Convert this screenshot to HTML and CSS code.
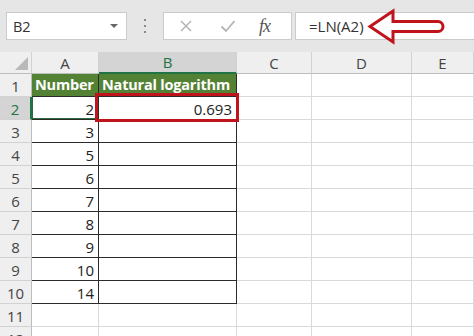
FILE: index.html
```html
<!DOCTYPE html>
<html lang="en">
<head>
    <meta charset="UTF-8">
    <title>LN function</title>
    <link rel="stylesheet" href="styles.css">
</head>
<body>
    <div class="topbar">
        <div class="namebox">
            <span>B2</span>
            <span class="caret"></span>
        </div>
        <div class="dots"><i></i><i></i><i></i></div>
        <div class="fxbox">
            <svg class="ico" width="14" height="14" viewBox="0 0 14 14"><path d="M2 2 L12 12 M12 2 L2 12" stroke="#b4b4b4" stroke-width="1.5" fill="none"/></svg>
            <svg class="ico" width="16" height="14" viewBox="0 0 16 14"><path d="M1.5 7.5 L6 12 L14.5 2" stroke="#b4b4b4" stroke-width="1.8" fill="none"/></svg>
            <span class="fx">fx</span>
        </div>
        <div class="formula">=LN(A2)</div>
        <svg class="arrow" width="82" height="40" viewBox="0 0 82 40">
            <path d="M4 19.5 L27 4 L27 14.5 L72 14.5 A5 5 0 0 1 72 24.5 L27 24.5 L27 35 Z" fill="#fff" stroke="#c0141c" stroke-width="3" stroke-linejoin="miter"/>
        </svg>
    </div>

    <div class="sheet">
        <div class="grid">
            <div class="ch corner"><span class="tri"></span></div>
            <div class="ch">A</div>
            <div class="ch on">B</div>
            <div class="ch">C</div>
            <div class="ch">D</div>
            <div class="ch">E</div>

            <div class="rh">1</div>
            <div class="c box head">Number</div>
            <div class="c box head">Natural logarithm</div>
            <div class="c"></div><div class="c"></div><div class="c"></div>

            <div class="rh on">2</div>
            <div class="c box ref">2</div>
            <div class="c box">0.693</div>
            <div class="c"></div><div class="c"></div><div class="c"></div>

            <div class="rh">3</div>
            <div class="c box">3</div><div class="c box"></div>
            <div class="c"></div><div class="c"></div><div class="c"></div>

            <div class="rh">4</div>
            <div class="c box">5</div><div class="c box"></div>
            <div class="c"></div><div class="c"></div><div class="c"></div>

            <div class="rh">5</div>
            <div class="c box">6</div><div class="c box"></div>
            <div class="c"></div><div class="c"></div><div class="c"></div>

            <div class="rh">6</div>
            <div class="c box">7</div><div class="c box"></div>
            <div class="c"></div><div class="c"></div><div class="c"></div>

            <div class="rh">7</div>
            <div class="c box">8</div><div class="c box"></div>
            <div class="c"></div><div class="c"></div><div class="c"></div>

            <div class="rh">8</div>
            <div class="c box">9</div><div class="c box"></div>
            <div class="c"></div><div class="c"></div><div class="c"></div>

            <div class="rh">9</div>
            <div class="c box">10</div><div class="c box"></div>
            <div class="c"></div><div class="c"></div><div class="c"></div>

            <div class="rh">10</div>
            <div class="c box">14</div><div class="c box"></div>
            <div class="c"></div><div class="c"></div><div class="c"></div>

            <div class="rh">11</div>
            <div class="c"></div><div class="c"></div>
            <div class="c"></div><div class="c"></div><div class="c"></div>

            <div class="rh">12</div>
            <div class="c"></div><div class="c"></div>
            <div class="c"></div><div class="c"></div><div class="c"></div>
        </div>
        <div class="mark"></div>
    </div>
</body>
</html>
```

FILE: styles.css
```css
body {
    margin: 0;
    width: 474px;
    height: 336px;
    overflow: hidden;
    background: #fff;
    font-family: "Open Sans", "Noto Sans", sans-serif;
    color: #222;
}
.topbar {
    position: relative;
    height: 52px;
    box-sizing: border-box;
    background: #e6e6e6;
    display: flex;
    align-items: flex-start;
    padding: 12px 0 0 6px;
}
.namebox, .fxbox, .formula {
    height: 28px;
    box-sizing: border-box;
    background: #fff;
    border: 1px solid #cbcbcb;
}
.namebox {
    width: 121px;
    display: flex;
    align-items: center;
    justify-content: space-between;
    padding: 0 8px 0 6px;
    font-size: 14.5px;
    color: #333;
}
.caret {
    width: 0;
    height: 0;
    border-left: 4px solid transparent;
    border-right: 4px solid transparent;
    border-top: 4px solid #666;
}
.dots {
    width: 36px;
    height: 28px;
    display: flex;
    flex-direction: column;
    align-items: center;
    justify-content: center;
    gap: 4px;
}
.dots i {
    width: 2px;
    height: 2px;
    background: #8a8a8a;
}
.fxbox {
    width: 129px;
    display: flex;
    align-items: center;
    padding-left: 15px;
}
.fxbox .ico:nth-child(2) {
    margin-left: 27px;
}
.fx {
    margin-left: 23px;
    font-family: "Liberation Serif", serif;
    font-style: italic;
    font-size: 18px;
    color: #555;
    letter-spacing: -1px;
}
.formula {
    flex: 1;
    margin-left: 3px;
    border-right: none;
    padding-left: 13px;
    font-size: 15px;
    line-height: 26px;
    color: #333;
}
.arrow {
    position: absolute;
    left: 366px;
    top: 7px;
}
.sheet {
    position: relative;
}
.grid {
    display: grid;
    grid-template-columns: 32px 67px 138px 75px 100px 62px;
    grid-template-rows: 22px;
    grid-auto-rows: 23px;
}
.grid > div {
    box-sizing: border-box;
    border-right: 1px solid #d9d9d9;
    border-bottom: 1px solid #d9d9d9;
    font-size: 15px;
    line-height: 20px;
    white-space: nowrap;
    overflow: hidden;
}
.ch {
    background: #efefef;
    border-bottom-color: #bdbdbd !important;
    border-right-color: #d2d2d2 !important;
    display: flex;
    align-items: center;
    justify-content: center;
    color: #444;
}
.ch.on {
    background: #d4d4d4;
    color: #217346;
    border-bottom: 2px solid #217346 !important;
}
.corner {
    position: relative;
}
.tri {
    position: absolute;
    right: 3px;
    bottom: 3px;
    width: 0;
    height: 0;
    border-left: 13px solid transparent;
    border-bottom: 13px solid #b9b9b9;
}
.rh {
    background: #efefef;
    border-right-color: #bdbdbd !important;
    border-bottom-color: #d2d2d2 !important;
    display: flex;
    align-items: flex-end;
    justify-content: center;
    color: #444;
}
.rh.on {
    background: #d4d4d4;
    color: #217346;
    border-right: 2px solid #217346 !important;
}
.c {
    display: flex;
    align-items: flex-end;
    justify-content: flex-end;
    padding-right: 4px;
}
.c.box {
    border-right-color: #2b2b2b;
    border-bottom-color: #2b2b2b;
}
.c.head {
    background: #548235;
    color: #fff;
    font-weight: 700;
    font-size: 14.5px;
    letter-spacing: -0.2px;
    justify-content: flex-start;
    padding-left: 3px;
    padding-right: 0;
    padding-bottom: 1px;
}
.c.ref {
    box-shadow: inset 1px 0 0 #2f6b38, inset 0 -1px 0 #2f6b38;
}
.mark {
    position: absolute;
    left: 95px;
    top: 41px;
    width: 144px;
    height: 29px;
    box-sizing: border-box;
    border: 3px solid #c0141c;
}
```
